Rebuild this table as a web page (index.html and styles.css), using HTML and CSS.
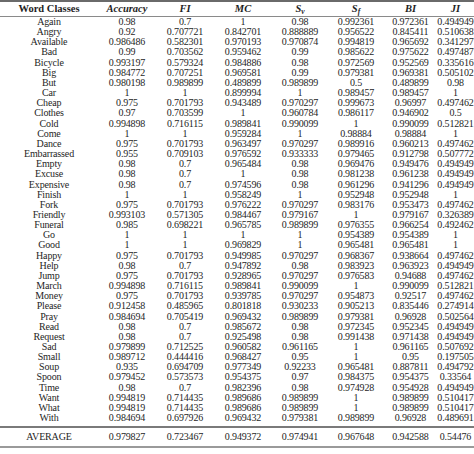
FILE: index.html
```html
<!DOCTYPE html>
<html>
<head>
<meta charset="utf-8">
<link rel="stylesheet" href="styles.css">
</head>
<body>
<table class="results">
<colgroup>
<col class="col-word"><col class="col-acc"><col class="col-fi"><col class="col-mc"><col class="col-sv"><col class="col-sf"><col class="col-bi"><col class="col-ji">
</colgroup>
<thead>
<tr class="head">
<th class="h-word">Word Classes</th>
<th class="h-it">Accuracy</th>
<th class="h-it">FI</th>
<th class="h-it">MC</th>
<th class="h-math">S<sub>v</sub></th>
<th class="h-math">S<sub>f</sub></th>
<th class="h-it">BI</th>
<th class="h-it">JI</th>
</tr>
</thead>
<tbody class="body">
<tr><td>Again</td><td>0.98</td><td>0.7</td><td>1</td><td>0.98</td><td>0.992361</td><td>0.972361</td><td>0.494949</td></tr>
<tr><td>Angry</td><td>0.92</td><td>0.707721</td><td>0.842701</td><td>0.888889</td><td>0.956522</td><td>0.845411</td><td>0.510638</td></tr>
<tr><td>Available</td><td>0.986486</td><td>0.582301</td><td>0.970193</td><td>0.970874</td><td>0.994819</td><td>0.965692</td><td>0.341297</td></tr>
<tr><td>Bad</td><td>0.99</td><td>0.703562</td><td>0.959462</td><td>0.99</td><td>0.985622</td><td>0.975622</td><td>0.497487</td></tr>
<tr><td>Bicycle</td><td>0.993197</td><td>0.579324</td><td>0.984886</td><td>0.98</td><td>0.972569</td><td>0.952569</td><td>0.335616</td></tr>
<tr><td>Big</td><td>0.984772</td><td>0.707251</td><td>0.969581</td><td>0.99</td><td>0.979381</td><td>0.969381</td><td>0.505102</td></tr>
<tr><td>But</td><td>0.980198</td><td>0.989899</td><td>0.489899</td><td>0.989899</td><td>0.5</td><td>0.489899</td><td>0.98</td></tr>
<tr><td>Car</td><td>1</td><td>1</td><td>0.899994</td><td>1</td><td>0.989457</td><td>0.989457</td><td>1</td></tr>
<tr><td>Cheap</td><td>0.975</td><td>0.701793</td><td>0.943489</td><td>0.970297</td><td>0.999673</td><td>0.96997</td><td>0.497462</td></tr>
<tr><td>Clothes</td><td>0.97</td><td>0.703599</td><td>1</td><td>0.960784</td><td>0.986117</td><td>0.946902</td><td>0.5</td></tr>
<tr><td>Cold</td><td>0.994898</td><td>0.716115</td><td>0.989841</td><td>0.990099</td><td>1</td><td>0.990099</td><td>0.512821</td></tr>
<tr><td>Come</td><td>1</td><td>1</td><td>0.959284</td><td>1</td><td>0.98884</td><td>0.98884</td><td>1</td></tr>
<tr><td>Dance</td><td>0.975</td><td>0.701793</td><td>0.963497</td><td>0.970297</td><td>0.989916</td><td>0.960213</td><td>0.497462</td></tr>
<tr><td>Embarrassed</td><td>0.955</td><td>0.709103</td><td>0.976592</td><td>0.933333</td><td>0.979465</td><td>0.912798</td><td>0.507772</td></tr>
<tr><td>Empty</td><td>0.98</td><td>0.7</td><td>0.965484</td><td>0.98</td><td>0.969476</td><td>0.949476</td><td>0.494949</td></tr>
<tr><td>Excuse</td><td>0.98</td><td>0.7</td><td>1</td><td>0.98</td><td>0.981238</td><td>0.961238</td><td>0.494949</td></tr>
<tr><td>Expensive</td><td>0.98</td><td>0.7</td><td>0.974596</td><td>0.98</td><td>0.961296</td><td>0.941296</td><td>0.494949</td></tr>
<tr><td>Finish</td><td>1</td><td>1</td><td>0.958249</td><td>1</td><td>0.952948</td><td>0.952948</td><td>1</td></tr>
<tr><td>Fork</td><td>0.975</td><td>0.701793</td><td>0.976222</td><td>0.970297</td><td>0.983176</td><td>0.953473</td><td>0.497462</td></tr>
<tr><td>Friendly</td><td>0.993103</td><td>0.571305</td><td>0.984467</td><td>0.979167</td><td>1</td><td>0.979167</td><td>0.326389</td></tr>
<tr><td>Funeral</td><td>0.985</td><td>0.698221</td><td>0.965785</td><td>0.989899</td><td>0.976355</td><td>0.966254</td><td>0.492462</td></tr>
<tr><td>Go</td><td>1</td><td>1</td><td>1</td><td>1</td><td>0.954389</td><td>0.954389</td><td>1</td></tr>
<tr><td>Good</td><td>1</td><td>1</td><td>0.969829</td><td>1</td><td>0.965481</td><td>0.965481</td><td>1</td></tr>
<tr><td>Happy</td><td>0.975</td><td>0.701793</td><td>0.949985</td><td>0.970297</td><td>0.968367</td><td>0.938664</td><td>0.497462</td></tr>
<tr><td>Help</td><td>0.98</td><td>0.7</td><td>0.947892</td><td>0.98</td><td>0.983923</td><td>0.963923</td><td>0.494949</td></tr>
<tr><td>Jump</td><td>0.975</td><td>0.701793</td><td>0.928965</td><td>0.970297</td><td>0.976583</td><td>0.94688</td><td>0.497462</td></tr>
<tr><td>March</td><td>0.994898</td><td>0.716115</td><td>0.989841</td><td>0.990099</td><td>1</td><td>0.990099</td><td>0.512821</td></tr>
<tr><td>Money</td><td>0.975</td><td>0.701793</td><td>0.939785</td><td>0.970297</td><td>0.954873</td><td>0.92517</td><td>0.497462</td></tr>
<tr><td>Please</td><td>0.912458</td><td>0.485965</td><td>0.801818</td><td>0.930233</td><td>0.905213</td><td>0.835446</td><td>0.274914</td></tr>
<tr><td>Pray</td><td>0.984694</td><td>0.705419</td><td>0.969432</td><td>0.989899</td><td>0.979381</td><td>0.96928</td><td>0.502564</td></tr>
<tr><td>Read</td><td>0.98</td><td>0.7</td><td>0.985672</td><td>0.98</td><td>0.972345</td><td>0.952345</td><td>0.494949</td></tr>
<tr><td>Request</td><td>0.98</td><td>0.7</td><td>0.925498</td><td>0.98</td><td>0.991438</td><td>0.971438</td><td>0.494949</td></tr>
<tr><td>Sad</td><td>0.979899</td><td>0.712525</td><td>0.960582</td><td>0.961165</td><td>1</td><td>0.961165</td><td>0.507692</td></tr>
<tr><td>Small</td><td>0.989712</td><td>0.444416</td><td>0.968427</td><td>0.95</td><td>1</td><td>0.95</td><td>0.197505</td></tr>
<tr><td>Soup</td><td>0.935</td><td>0.694709</td><td>0.977349</td><td>0.92233</td><td>0.965481</td><td>0.887811</td><td>0.494792</td></tr>
<tr><td>Spoon</td><td>0.979452</td><td>0.573573</td><td>0.954375</td><td>0.97</td><td>0.984375</td><td>0.954375</td><td>0.33564</td></tr>
<tr><td>Time</td><td>0.98</td><td>0.7</td><td>0.982396</td><td>0.98</td><td>0.974928</td><td>0.954928</td><td>0.494949</td></tr>
<tr><td>Want</td><td>0.994819</td><td>0.714435</td><td>0.989686</td><td>0.989899</td><td>1</td><td>0.989899</td><td>0.510417</td></tr>
<tr><td>What</td><td>0.994819</td><td>0.714435</td><td>0.989686</td><td>0.989899</td><td>1</td><td>0.989899</td><td>0.510417</td></tr>
<tr class="last"><td>With</td><td>0.984694</td><td>0.697926</td><td>0.969432</td><td>0.979381</td><td>0.989899</td><td>0.96928</td><td>0.489691</td></tr>
</tbody>
<tfoot>
<tr class="avg"><td>AVERAGE</td><td>0.979827</td><td>0.723467</td><td>0.949372</td><td>0.974941</td><td>0.967648</td><td>0.942588</td><td>0.54476</td></tr>
</tfoot>
</table>
</body>
</html>
```
FILE: styles.css
```css
html, body {
  margin: 0;
  padding: 0;
  background: #ffffff;
}
body {
  font-family: "Liberation Serif", "Times New Roman", serif;
  color: #1e1e1e;
}
.results {
  width: 474px;
  table-layout: fixed;
  border-collapse: collapse;
  font-size: 10px;
  letter-spacing: -0.15px;
}
.col-word { width: 98px; }
.col-acc { width: 58px; }
.col-fi { width: 58px; }
.col-mc { width: 58px; }
.col-sv { width: 56px; }
.col-sf { width: 56px; }
.col-bi { width: 53px; }
.col-ji { width: 37px; }
.results th,
.results td {
  padding: 0;
  text-align: center;
  white-space: nowrap;
}
.head th {
  height: 14px;
  line-height: 14px;
  border-top: 2px solid #6a6a6a;
  border-bottom: 1px solid #8a8a8a;
  font-weight: bold;
  font-size: 10.5px;
  letter-spacing: 0;
}
.h-it { font-style: italic; }
.h-math { font-style: italic; font-weight: normal; }
.h-math sub {
  font-size: 7.5px;
  line-height: 0;
  vertical-align: -2px;
}
.body td {
  height: 10.15px;
  line-height: 10.15px;
}
.body tr.last td {
  padding-bottom: 3px;
}
.avg td {
  height: 18px;
  line-height: 18px;
  border-top: 2px solid #7a7a7a;
  border-bottom: 2px solid #9a9a9a;
}
```
